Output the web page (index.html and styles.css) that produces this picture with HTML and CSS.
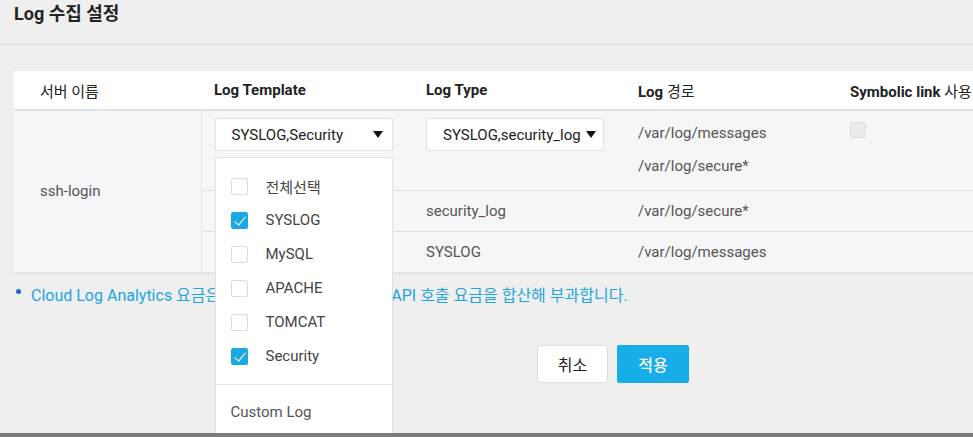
FILE: index.html
```html
<!DOCTYPE html>
<html lang="ko">
<head>
<meta charset="UTF-8" />
<title>Log 수집 설정</title>
<link rel="stylesheet" href="styles.css">
</head>
<body>
    <div class="modal">
        <div class="modal-head">
            <h2 class="modal-title">Log 수집 설정</h2>
        </div>

        <div class="modal-body">
            <table class="log-table">
                <thead>
                    <tr>
                        <th class="col-server"><span class="ko">서버 이름</span></th>
                        <th>Log Template</th>
                        <th>Log Type</th>
                        <th>Log <span class="ko">경로</span></th>
                        <th>Symbolic link <span class="ko">사용</span></th>
                        <th></th>
                    </tr>
                </thead>
                <tbody>
                    <tr class="row-main">
                        <td class="col-server" rowspan="3">ssh-login</td>
                        <td class="cell-select">
                            <div class="select">
                                <span>SYSLOG,Security</span>
                                <i class="caret"></i>
                            </div>

                            <!-- open template dropdown -->
                            <div class="dropdown">
                                <ul class="dropdown-list">
                                    <li><span class="check"></span>전체선택</li>
                                    <li><span class="check checked"></span>SYSLOG</li>
                                    <li><span class="check"></span>MySQL</li>
                                    <li><span class="check"></span>APACHE</li>
                                    <li><span class="check"></span>TOMCAT</li>
                                    <li><span class="check checked"></span>Security</li>
                                </ul>
                                <div class="dropdown-custom">Custom Log</div>
                            </div>
                        </td>
                        <td class="cell-select">
                            <div class="select select-type">
                                <span>SYSLOG,security_log</span>
                                <i class="caret"></i>
                            </div>
                        </td>
                        <td class="cell-paths">
                            <div>/var/log/messages</div>
                            <div>/var/log/secure*</div>
                        </td>
                        <td class="cell-check"><span class="symlink"></span></td>
                        <td></td>
                    </tr>
                    <tr class="row-sub">
                        <td></td>
                        <td>security_log</td>
                        <td>/var/log/secure*</td>
                        <td></td>
                        <td></td>
                    </tr>
                    <tr class="row-sub">
                        <td></td>
                        <td>SYSLOG</td>
                        <td>/var/log/messages</td>
                        <td></td>
                        <td></td>
                    </tr>
                </tbody>
            </table>

            <p class="note">Cloud Log Analytics 요금은 데이터 저장 요금 및 검색 API 호출 요금을 합산해 부과합니다.</p>

            <div class="actions">
                <button class="btn">취소</button>
                <button class="btn btn-primary">적용</button>
            </div>
        </div>
    </div>
</body>
</html>
```

FILE: styles.css
```css
body {
    margin: 0;
    background-color: #7a7a7a;
    font-family: Roboto, "Noto Sans CJK KR", sans-serif;
    font-size: 15px;
    color: #444;
    overflow: hidden;
}

.modal {
    width: 1226px;
    height: 433px;
    background-color: #efefef;
}

.modal-head {
    height: 45px;
    padding: 0 14px;
    border-bottom: 1px solid #dcdcdc;
    box-sizing: border-box;
}

.modal-title {
    margin: 0;
    font-size: 18px;
    font-weight: bold;
    line-height: 27px;
    color: #222;
}

.modal-body {
    padding: 26px 14px 0;
}

/* Table */
.log-table {
    width: 100%;
    border-collapse: collapse;
    table-layout: fixed;
    box-shadow: 0 2px 0 #e4e4e4;
}

.log-table th {
    height: 38px;
    padding: 0 13px;
    text-align: left;
    font-weight: bold;
    color: #222;
    background-color: #fff;
    border-bottom: 2px solid #e2e2e2;
    width: 186px;
}

.log-table th .ko {
    font-weight: normal;
}

.log-table th:last-child {
    width: auto;
}

.log-table .col-server {
    width: 161px;
    padding-left: 26px;
    padding-right: 0;
}

.log-table td {
    padding: 0 13px;
    background-color: #f5f6f8;
    color: #555;
    vertical-align: middle;
}

.log-table td.col-server {
    border-right: 1px solid #e4e4e4;
}

.row-main td {
    height: 80px;
    box-sizing: border-box;
    vertical-align: top;
    border-bottom: 1px solid #e1e1e1;
}

.row-main td.col-server {
    vertical-align: middle;
    border-bottom: none;
}

.row-sub td {
    height: 40px;
    border-bottom: 1px solid #e1e1e1;
}

.row-sub:last-child td {
    height: 40px;
    border-bottom: none;
}

.cell-select {
    position: relative;
    padding-top: 7px !important;
}

.select {
    display: flex;
    align-items: center;
    justify-content: space-between;
    width: 178px;
    height: 33px;
    padding: 0 9px 0 16px;
    background-color: #fff;
    border: 1px solid #e0e0e0;
    border-radius: 2px;
    box-sizing: border-box;
    color: #222;
}

.select-type {
    padding-right: 7px;
}

.caret {
    flex-shrink: 0;
    width: 0;
    height: 0;
    border-left: 5px solid transparent;
    border-right: 5px solid transparent;
    border-top: 7px solid #111;
}

.cell-paths {
    padding-top: 6px !important;
    line-height: 33px;
}

.cell-check {
    padding-top: 11px !important;
}

.symlink {
    display: block;
    width: 16px;
    height: 16px;
    background-color: #ebebeb;
    border: 1px solid #dedede;
    border-radius: 2px;
    box-sizing: border-box;
}

/* Dropdown */
.dropdown {
    position: absolute;
    top: 46px;
    left: 13px;
    z-index: 50;
    width: 178px;
    height: 300px;
    background-color: #fff;
    border: 1px solid #e2e2e2;
    border-radius: 3px;
    box-sizing: border-box;
}

.dropdown-list {
    list-style: none;
    margin: 0;
    padding: 11px 0 11px;
    border-bottom: 1px solid #e6e6e6;
}

.dropdown-list li {
    display: flex;
    align-items: center;
    height: 34px;
    padding-left: 15px;
    color: #444;
}

.check {
    width: 17px;
    height: 17px;
    margin-right: 18px;
    border: 1px solid #dcdcdc;
    border-radius: 2px;
    box-sizing: border-box;
    position: relative;
}

.check.checked {
    background-color: #1ba9e6;
    border-color: #1ba9e6;
}

.check.checked::after {
    content: "";
    position: absolute;
    left: 5px;
    top: 1px;
    width: 5px;
    height: 10px;
    border-right: 1px solid #fff;
    border-bottom: 1px solid #fff;
    transform: rotate(40deg);
}

.dropdown-custom {
    height: 54px;
    line-height: 54px;
    padding-left: 15px;
    color: #555;
}

/* Note and buttons */
.note {
    position: relative;
    margin: 14px 0 0;
    padding-left: 17px;
    font-size: 16px;
    line-height: 20px;
    color: #1ea5e2;
}

.note::before {
    content: "";
    position: absolute;
    left: 2px;
    top: 3px;
    width: 5px;
    height: 5px;
    border-radius: 50%;
    background-color: #1a6cd0;
}

.actions {
    display: flex;
    justify-content: center;
    gap: 9px;
    margin-top: 39px;
}

.btn {
    width: 71px;
    height: 38px;
    font-family: Roboto, "Noto Sans CJK KR", sans-serif;
    font-size: 16px;
    color: #222;
    background-color: #fff;
    border: 1px solid #dedede;
    border-radius: 2px;
}

.btn-primary {
    width: 72px;
    color: #fff;
    font-weight: 500;
    background-color: #17ade8;
    border-color: #17ade8;
}
```
